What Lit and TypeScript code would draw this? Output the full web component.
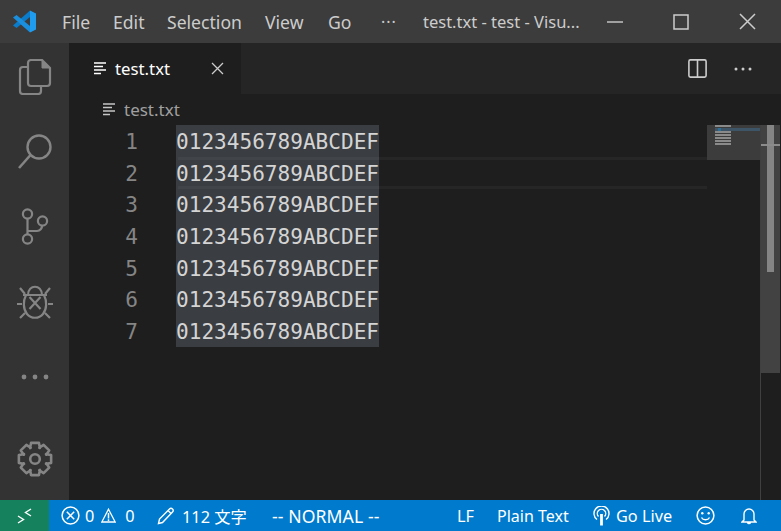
import { LitElement, html, css, svg } from "lit";
import { customElement } from "lit/decorators.js";

const ic = (w: number, h: number, vb: string, body: unknown, cls = "") =>
  html`<svg class=${cls} width=${w} height=${h} viewBox=${vb} fill="none" stroke="currentColor">${body}</svg>`;

const lines4 = svg`<path d="M0 1h12M0 4.5h9M0 8h12M0 11.5h7" stroke-width="1.6"/>`;

const gearPath = (() => {
  const teeth = 8, ro = 16.6, ri = 12, c = 18;
  const pts: string[] = [];
  for (let i = 0; i < teeth; i++) {
    const a = (i * 2 * Math.PI) / teeth - Math.PI / 2;
    const w = 0.24, v = 0.3;
    for (const [r, d] of [[ri, -v - 0.12], [ro, -w], [ro, w], [ri, v + 0.12]] as [number, number][]) {
      pts.push(`${(c + r * Math.cos(a + d)).toFixed(2)} ${(c + r * Math.sin(a + d)).toFixed(2)}`);
    }
  }
  return "M" + pts.join("L") + "Z";
})();

@customElement("app-root")
export class AppRoot extends LitElement {
  static styles = css`
    :host { display: block; width: 781px; height: 531px; overflow: hidden; font-family: "Noto Sans", "Noto Sans CJK JP", sans-serif; background: #1e1e1e; }
    svg { display: block; flex: none; }
    .app { display: flex; flex-direction: column; height: 531px; }
    .title { flex: 0 0 43px; background: #3c3c3c; color: #cccccc; display: flex; align-items: center; font-size: 17.6px; padding-left: 13px; }
    .logo { margin-right: 26px; }
    .m { flex: none; }
    .m-file { width: 51px; } .m-edit { width: 54px; } .m-sel { width: 98px; } .m-view { width: 63px; } .m-go { width: 53px; }
    .m-more { width: 42px; font-size: 16px; letter-spacing: 1px; }
    .wt { width: 184px; color: #cccccc; white-space: nowrap; font-size: 16.5px; }
    .wc { margin-right: 50px; color: #cccccc; }
    .wc.last { margin-right: 0; }
    .body { flex: 1; display: flex; min-height: 0; }
    .activity { flex: 0 0 69px; background: #333333; color: #858585; display: flex; flex-direction: column; align-items: center; gap: 7px; padding-bottom: 8px; box-sizing: border-box; }
    .act { flex: 0 0 68px; display: flex; align-items: center; justify-content: center; }
    .spacer { flex: 1; }
    .main { flex: 1; display: flex; flex-direction: column; min-width: 0; }
    .tabs { flex: 0 0 51px; background: #252526; display: flex; align-items: center; color: #cccccc; }
    .tab { width: 172px; height: 51px; background: #1e1e1e; display: flex; align-items: center; box-sizing: border-box; padding-left: 25px; color: #fff; font-size: 16.8px; flex: none; }
    .tab .name { margin-left: 9px; width: 96px; }
    .tab-x { color: #cccccc; }
    .tab-actions { margin-left: auto; display: flex; align-items: center; gap: 27px; padding-right: 29px; }
    .crumb { flex: 0 0 31px; display: flex; align-items: center; padding-left: 34px; color: #a0a0a0; font-size: 17px; gap: 9px; }
    .crumb svg { color: #c5c5c5; }
    .editor { flex: 1; display: flex; min-height: 0; }
    .lines { flex: 1; position: relative; font-family: "DejaVu Sans Mono", monospace; font-size: 21.08px; }
    .line { display: flex; height: 31.7px; line-height: 33.6px; }
    .num { width: 69px; text-align: right; color: #858585; margin-right: 38px; flex: none; }
    .code { background: #3a3d41; color: #d4d4d4; width: 203px; flex: none; white-space: pre; }
    .current { position: absolute; left: 109px; right: 0; top: 32px; height: 32px; box-sizing: border-box; border-top: 3px solid rgba(255,255,255,.04); border-bottom: 3px solid rgba(255,255,255,.04); }
    .minimap { flex: 0 0 53px; display: flex; flex-direction: column; }
    .mini-view { height: 35px; background: #3c3c3c; position: relative; box-sizing: border-box; padding-left: 8px; display: flex; flex-direction: column; gap: 1px; }
    .mini-row { height: 2px; width: 16px; background: #8a8a8a; }
    .mini-sel { position: absolute; left: 8px; right: 0; top: 3px; height: 3px; background: #3d5566; }
    .mini-cur { position: absolute; left: 11px; top: 3px; width: 3px; height: 3px; background: #2d6f96; }
    .scroll { flex: 0 0 21px; box-sizing: border-box; border-left: 1px solid #404040; padding-right: 1px; }
    .thumb { height: 248px; background: #424242; position: relative; display: flex; justify-content: center; }
    .ruler { width: 7px; height: 147px; background: #858585; }
    .tick { position: absolute; left: 0; right: 0; top: 19px; height: 2px; background: #8c8c8c; }
    .status { flex: 0 0 31px; background: #007acc; color: #fff; display: flex; align-items: center; font-size: 16.3px; white-space: nowrap; }
    .remote { flex: 0 0 49px; height: 31px; background: #16825d; display: flex; align-items: center; justify-content: center; }
    .s { display: flex; align-items: center; flex: none; }
    .s-err { margin-left: 12px; width: 95px; }
    .s-err .t1 { margin: 0 7px 0 5px; }
    .s-err .t2 { margin-left: 9px; }
    .s-words { width: 115px; gap: 7px; margin-left: 1px; }
    .s-mode { width: 185px; font-size: 17.6px; letter-spacing: .1px; }
    .s-lf { width: 40px; }
    .s-plain { width: 96px; font-size: 16px; }
    .s-live { width: 103px; gap: 6px; }
    .s-smile { width: 45px; }
  `;

  render() {
    const lines = [1, 2, 3, 4, 5, 6, 7];
    return html`<div class="app">
      <div class="title">
        <svg class="logo" width="23" height="23" viewBox="0 0 23 23">
          <path d="M17 .5V7L3.500 18L0 15.500Z" fill="#0a7cc9"/>
          <path d="M17 22.500V16L3.500 5L0 7.500Z" fill="#1a8fde"/>
          <path d="M17 .5L23 3.500V19.500L17 22.500Z" fill="#1f9cf0"/>
        </svg>
        <span class="m m-file">File</span><span class="m m-edit">Edit</span><span class="m m-sel">Selection</span><span class="m m-view">View</span><span class="m m-go">Go</span><span class="m m-more">···</span>
        <span class="wt">test.txt - test - Visu...</span>
        ${ic(16, 16, "0 0 16 16", svg`<path d="M0 8h16" stroke-width="1.4"/>`, "wc")}
        ${ic(16, 16, "0 0 16 16", svg`<rect x="1" y="1" width="14" height="14" stroke-width="1.5"/>`, "wc")}
        ${ic(17, 17, "0 0 17 17", svg`<path d="M1 1l15 15M16 1L1 16" stroke-width="1.5"/>`, "wc last")}
      </div>
      <div class="body">
        <div class="activity">
          <div class="act">${ic(34, 36, "0 0 34 36", svg`<path d="M10.500 8H5a3 3 0 0 0-3 3v21a3 3 0 0 0 3 3h15a3 3 0 0 0 3-3v-5" stroke-width="2.2"/><path d="M13 1h11l8 8v15a3 3 0 0 1-3 3H13a3 3 0 0 1-3-3V4a3 3 0 0 1 3-3z" stroke-width="2.2"/><path d="M24 2v7h7z" fill="currentColor" stroke-width="1"/>`)}</div>
          <div class="act">${ic(36, 36, "0 0 36 36", svg`<circle cx="22" cy="13" r="11.500" stroke-width="2.4"/><path d="M13.500 21L2 34" stroke-width="2.6"/>`)}</div>
          <div class="act">${ic(28, 38, "0 0 28 38", svg`<circle cx="6.500" cy="6" r="4.600" stroke-width="2.2"/><circle cx="6.500" cy="31" r="4.600" stroke-width="2.2"/><circle cx="21.500" cy="13" r="4.600" stroke-width="2.2"/><path d="M6.500 11v15M7 23h9a5 5 0 0 0 5-5.500" stroke-width="2.2"/>`)}</div>
          <div class="act">${ic(36, 36, "0 0 36 36", svg`<path d="M11 11c0-11 14-11 14 0" stroke-width="2"/><path d="M6 11h24M9 11c-3 6-3 14 1 19 4 5 12 5 16 0 4-5 4-13 1-19" stroke-width="2.2"/><path d="M12.500 13l11 12M23.500 13l-11 12" stroke-width="2.2"/><path d="M8 10L3 4M28 10l5-6M5 20H0M31 20h5M8 29l-5 5M28 29l5 5" stroke-width="2.2"/>`)}</div>
          <div class="act">${ic(28, 6, "0 0 28 6", svg`<circle cx="3" cy="3" r="2.400" fill="currentColor" stroke="none"/><circle cx="14" cy="3" r="2.400" fill="currentColor" stroke="none"/><circle cx="25" cy="3" r="2.400" fill="currentColor" stroke="none"/>`)}</div>
          <div class="spacer"></div>
          <div class="act">${ic(36, 36, "0 0 36 36", svg`<path d=${gearPath} stroke-width="2.600" stroke-linejoin="round"/><circle cx="18" cy="18" r="4.800" stroke-width="2.600"/>`)}</div>
        </div>
        <div class="main">
          <div class="tabs">
            <div class="tab">
              ${ic(12, 13, "0 0 12 13", lines4)}
              <span class="name">test.txt</span>
              ${ic(13, 13, "0 0 13 13", svg`<path d="M1 1l11 11M12 1L1 12" stroke-width="1.300"/>`, "tab-x")}
            </div>
            <div class="tab-actions">
              ${ic(19, 19, "0 0 19 19", svg`<rect x=".9" y=".9" width="17.2" height="17.200" rx="1.500" stroke-width="1.600"/><path d="M9.500 1v17" stroke-width="1.600"/>`)}
              ${ic(18, 4, "0 0 18 4", svg`<circle cx="2" cy="2" r="1.500" fill="currentColor" stroke="none"/><circle cx="9" cy="2" r="1.500" fill="currentColor" stroke="none"/><circle cx="16" cy="2" r="1.500" fill="currentColor" stroke="none"/>`)}
            </div>
          </div>
          <div class="crumb">${ic(12, 13, "0 0 12 13", lines4)}<span>test.txt</span></div>
          <div class="editor">
            <div class="lines">
              ${lines.map((n) => html`<div class="line"><span class="num">${n}</span><span class="code">0123456789ABCDEF</span></div>`)}
              <div class="current"></div>
            </div>
            <div class="minimap">
              <div class="mini-view">
                ${lines.map(() => html`<div class="mini-row"></div>`)}
                <div class="mini-sel"></div><div class="mini-cur"></div>
              </div>
            </div>
            <div class="scroll">
              <div class="thumb"><div class="ruler"></div><div class="tick"></div></div>
            </div>
          </div>
        </div>
      </div>
      <div class="status">
        <div class="remote">${ic(15, 16, "0 0 15 16", svg`<path d="M1 8l5.500 3.500L1 15M14 1L8.500 4.500 14 8" stroke-width="1.400"/>`)}</div>
        <div class="s s-err">
          ${ic(19, 19, "0 0 19 19", svg`<circle cx="9.500" cy="9.500" r="8.400" stroke-width="1.500"/><path d="M5.800 5.800l7.400 7.400M13.200 5.800l-7.400 7.400" stroke-width="1.500"/>`)}
          <span class="t1">0</span>
          ${ic(15, 15, "0 0 15 15", svg`<path d="M7.500 1.200L14.200 14H.8z" stroke-width="1.300"/><path d="M7.500 5v5.500M7.500 11.200v1.800" stroke-width="1.500"/>`)}
          <span class="t2">0</span>
        </div>
        <div class="s s-words">
          ${ic(18, 18, "0 0 18 18", svg`<path d="M1.500 16.500l1-4.500L12.500 2a2 2 0 0 1 3 3L5.500 15.500zM11 3.500l3.500 3.500" stroke-width="1.400"/>`)}
          <span>112 文字</span>
        </div>
        <div class="s s-mode">-- NORMAL --</div>
        <div class="s s-lf">LF</div>
        <div class="s s-plain">Plain Text</div>
        <div class="s s-live">
          ${ic(17, 20, "0 0 17 20", svg`<path d="M4 13.500a7.500 7.500 0 1 1 9 0" stroke-width="1.400"/><path d="M5.500 10.500a4.200 4.200 0 1 1 6 0" stroke-width="1.400"/><path d="M8.500 8v11.500" stroke-width="2.800"/>`)}
          <span>Go Live</span>
        </div>
        <div class="s s-smile">${ic(19, 19, "0 0 19 19", svg`<circle cx="9.500" cy="9.500" r="8.400" stroke-width="1.500"/><circle cx="6.300" cy="7.300" r="1.200" fill="currentColor" stroke="none"/><circle cx="12.700" cy="7.300" r="1.200" fill="currentColor" stroke="none"/><path d="M5.500 11.500c1.500 3 6.500 3 8 0" stroke-width="1.400"/>`)}</div>
        <div class="s">${ic(16, 18, "0 0 16 18", svg`<path d="M3 13V7a5 5 0 0 1 10 0v6l2 2H1zM6.500 15.500a1.600 1.600 0 0 0 3 0" stroke-width="1.400"/>`)}</div>
      </div>
    </div>`;
  }
}
